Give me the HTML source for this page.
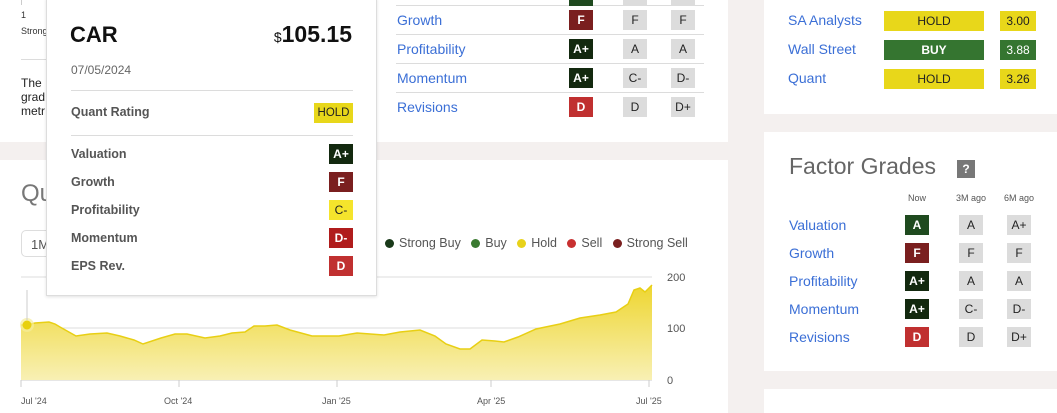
<!DOCTYPE html>
<html><head><meta charset="utf-8"><style>
*{margin:0;padding:0;box-sizing:border-box}
body{width:1057px;height:413px;background:#f4f0ef;position:relative;overflow:hidden;font-family:"Liberation Sans",Arial,sans-serif}
.a{position:absolute}
.w{background:#fff}
.lk{color:#3b6fd6;font-size:14px}
.b{position:absolute;width:24px;height:20px;font-size:12px;line-height:20px;text-align:center;color:#fff;font-weight:bold}
.g{background:#dcdcdc;color:#222;font-weight:normal}
.ap{background:#13290f}.aa{background:#1f4a1f}.ff{background:#7a1f1f}.dd{background:#c03030}.dm{background:#b01c1c}.cm{background:#f5e42c;color:#222;font-weight:normal}
.ln{position:absolute;height:1px;background:#dcdcdc}
.pl{position:absolute;left:24px;font-size:12.5px;font-weight:bold;color:#555}
.dot{display:inline-block;width:9px;height:9px;border-radius:50%;vertical-align:-1px;margin-right:5px}
</style></head><body>
<div class="a w" style="left:0;top:0;width:728px;height:142px"></div>
<div class="a w" style="left:0;top:160px;width:728px;height:253px"></div>
<div class="a w" style="left:764px;top:0;width:293px;height:114px"></div>
<div class="a w" style="left:764px;top:132px;width:293px;height:239px"></div>
<div class="a w" style="left:764px;top:389px;width:293px;height:24px"></div>

<div class="a" style="left:21px;top:0;width:1px;height:5px;background:#ccc"></div>
<div class="a" style="left:21px;top:10px;font-size:9px;color:#333">1</div>
<div class="a" style="left:21px;top:26px;font-size:9px;color:#333">Strong</div>
<div class="ln" style="left:21px;top:59px;width:30px"></div>
<div class="a" style="left:21px;top:76px;font-size:12px;line-height:14px;color:#222">The<br>grad<br>metr</div>
<div class="a" style="left:21px;top:180px;font-size:24px;color:#777">Qu</div>
<div class="a" style="left:21px;top:230px;width:40px;height:27px;border:1px solid #ddd;border-radius:5px;font-size:13px;color:#555;padding:6px 9px">1M</div>

<div class="ln" style="left:396px;top:5px;width:308px"></div>
<div class="ln" style="left:396px;top:34px;width:308px"></div>
<div class="ln" style="left:396px;top:63px;width:308px"></div>
<div class="ln" style="left:396px;top:92px;width:308px"></div>
<div class="b aa" style="left:569px;top:-14px"></div><div class="b g" style="left:623px;top:-14px"></div><div class="b g" style="left:671px;top:-14px"></div>
<div class="a lk" style="left:397px;top:12px">Growth</div>
<div class="b ff" style="left:569px;top:10px">F</div><div class="b g" style="left:623px;top:10px">F</div><div class="b g" style="left:671px;top:10px">F</div>
<div class="a lk" style="left:397px;top:41px">Profitability</div>
<div class="b ap" style="left:569px;top:39px">A+</div><div class="b g" style="left:623px;top:39px">A</div><div class="b g" style="left:671px;top:39px">A</div>
<div class="a lk" style="left:397px;top:70px">Momentum</div>
<div class="b ap" style="left:569px;top:68px">A+</div><div class="b g" style="left:623px;top:68px">C-</div><div class="b g" style="left:671px;top:68px">D-</div>
<div class="a lk" style="left:397px;top:99px">Revisions</div>
<div class="b dd" style="left:569px;top:97px">D</div><div class="b g" style="left:623px;top:97px">D</div><div class="b g" style="left:671px;top:97px">D+</div>

<div class="a" style="left:385px;top:236px;font-size:12.5px;color:#555;white-space:nowrap">
<span class="dot" style="background:#1a3a1a"></span>Strong Buy &nbsp; <span class="dot" style="background:#3a7a30"></span>Buy &nbsp; <span class="dot" style="background:#e8d21a"></span>Hold &nbsp; <span class="dot" style="background:#c83030"></span>Sell &nbsp; <span class="dot" style="background:#7a1f1f"></span>Strong Sell</div>

<svg class="a" style="left:0;top:260px" width="700" height="153">
<defs><linearGradient id="gr" x1="0" y1="0" x2="0" y2="1"><stop offset="0" stop-color="#eed630"/><stop offset="1" stop-color="#f8f0b4"/></linearGradient></defs>
<line x1="21" y1="17" x2="652" y2="17" stroke="#ddd"/>
<line x1="21" y1="68" x2="652" y2="68" stroke="#ddd"/>
<line x1="21" y1="120" x2="652" y2="120" stroke="#ccc"/>
<polygon fill="url(#gr)" points="21,65 27,65 35,63 49,62 55,64 60,67 76,76 90,74 107,73 120,76 134,80 143,84 161,78 175,74 187,74 205,78 220,76 232,73 245,72 254,66 265,66 277,65 290,70 312,76 339,76 357,73 384,75 400,72 420,70 435,76 446,84 460,89 470,89 482,80 495,81 504,82 518,77 536,69 560,64 580,58 600,55 616,52 628,44 634,30 640,28 645,32 652,25 652,120 21,120"/>
<polyline fill="none" stroke="#e8cf14" stroke-width="1.5" points="21,65 27,65 35,63 49,62 55,64 60,67 76,76 90,74 107,73 120,76 134,80 143,84 161,78 175,74 187,74 205,78 220,76 232,73 245,72 254,66 265,66 277,65 290,70 312,76 339,76 357,73 384,75 400,72 420,70 435,76 446,84 460,89 470,89 482,80 495,81 504,82 518,77 536,69 560,64 580,58 600,55 616,52 628,44 634,30 640,28 645,32 652,25"/>
<circle cx="27" cy="65" r="7" fill="#f5ec9a" opacity=".7"/><circle cx="27" cy="65" r="4.5" fill="#e8d00e"/>
<line x1="27" y1="30" x2="27" y2="60" stroke="#ccc"/>
<g stroke="#ccc"><line x1="21" y1="120" x2="21" y2="127"/><line x1="179" y1="120" x2="179" y2="127"/><line x1="337" y1="120" x2="337" y2="127"/><line x1="491" y1="120" x2="491" y2="127"/><line x1="649" y1="120" x2="649" y2="127"/></g>
<g font-size="9" fill="#555" font-family="Liberation Sans,sans-serif"><text x="21" y="144">Jul '24</text><text x="164" y="144">Oct '24</text><text x="322" y="144">Jan '25</text><text x="477" y="144">Apr '25</text><text x="636" y="144">Jul '25</text></g>
<g font-size="11" fill="#555" font-family="Liberation Sans,sans-serif"><text x="667" y="21">200</text><text x="667" y="72">100</text><text x="667" y="124">0</text></g>
</svg>

<div class="a" style="left:46px;top:-2px;width:331px;height:298px;background:#fff;border:1px solid #ddd;box-shadow:0 1px 3px rgba(0,0,0,.12)">
<div class="a" style="left:23px;top:23px;font-size:22px;font-weight:bold;color:#111">CAR</div>
<div class="a" style="right:24px;top:22px;font-size:23px;font-weight:bold;color:#111"><span style="font-size:14px;font-weight:normal">$</span>105.15</div>
<div class="a" style="left:24px;top:64px;font-size:12px;color:#666">07/05/2024</div>
<div class="ln" style="left:24px;top:91px;width:282px"></div>
<div class="pl" style="top:106px">Quant Rating</div>
<div class="a" style="left:267px;top:104px;width:39px;height:20px;background:#e8d71a;font-size:11.5px;line-height:20px;text-align:center;color:#222">HOLD</div>
<div class="ln" style="left:24px;top:136px;width:282px"></div>
<div class="pl" style="top:148px">Valuation</div><div class="b ap" style="left:282px;top:145px">A+</div>
<div class="pl" style="top:176px">Growth</div><div class="b ff" style="left:282px;top:173px">F</div>
<div class="pl" style="top:204px">Profitability</div><div class="b cm" style="left:282px;top:201px">C-</div>
<div class="pl" style="top:232px">Momentum</div><div class="b dm" style="left:282px;top:229px">D-</div>
<div class="pl" style="top:260px">EPS Rev.</div><div class="b dd" style="left:282px;top:257px">D</div>
</div>

<div class="a lk" style="left:788px;top:12px">SA Analysts</div>
<div class="a" style="left:884px;top:11px;width:100px;height:20px;background:#e8d71a;font-size:12px;line-height:20px;text-align:center;color:#222">HOLD</div>
<div class="a" style="left:1000px;top:11px;width:36px;height:20px;background:#e8d71a;font-size:12px;line-height:20px;text-align:center;color:#222">3.00</div>
<div class="a lk" style="left:788px;top:41px">Wall Street</div>
<div class="a" style="left:884px;top:40px;width:100px;height:20px;background:#357530;font-size:12px;line-height:20px;text-align:center;color:#fff;font-weight:bold">BUY</div>
<div class="a" style="left:1000px;top:40px;width:36px;height:20px;background:#357530;font-size:12px;line-height:20px;text-align:center;color:#fff">3.88</div>
<div class="a lk" style="left:788px;top:70px">Quant</div>
<div class="a" style="left:884px;top:69px;width:100px;height:20px;background:#e8d71a;font-size:12px;line-height:20px;text-align:center;color:#222">HOLD</div>
<div class="a" style="left:1000px;top:69px;width:36px;height:20px;background:#e8d71a;font-size:12px;line-height:20px;text-align:center;color:#222">3.26</div>

<div class="a" style="left:789px;top:153px;font-size:23px;color:#666">Factor Grades</div>
<div class="a" style="left:957px;top:160px;width:18px;height:18px;background:#777;color:#fff;font-size:12px;font-weight:bold;text-align:center;line-height:18px">?</div>
<div class="a" style="left:897px;top:193px;width:40px;text-align:center;font-size:9px;color:#555">Now</div>
<div class="a" style="left:947px;top:193px;width:48px;text-align:center;font-size:9px;color:#555">3M ago</div>
<div class="a" style="left:995px;top:193px;width:48px;text-align:center;font-size:9px;color:#555">6M ago</div>
<div class="a lk" style="left:789px;top:217px">Valuation</div>
<div class="b aa" style="left:905px;top:215px">A</div><div class="b g" style="left:959px;top:215px">A</div><div class="b g" style="left:1007px;top:215px">A+</div>
<div class="a lk" style="left:789px;top:245px">Growth</div>
<div class="b ff" style="left:905px;top:243px">F</div><div class="b g" style="left:959px;top:243px">F</div><div class="b g" style="left:1007px;top:243px">F</div>
<div class="a lk" style="left:789px;top:273px">Profitability</div>
<div class="b ap" style="left:905px;top:271px">A+</div><div class="b g" style="left:959px;top:271px">A</div><div class="b g" style="left:1007px;top:271px">A</div>
<div class="a lk" style="left:789px;top:301px">Momentum</div>
<div class="b ap" style="left:905px;top:299px">A+</div><div class="b g" style="left:959px;top:299px">C-</div><div class="b g" style="left:1007px;top:299px">D-</div>
<div class="a lk" style="left:789px;top:329px">Revisions</div>
<div class="b dd" style="left:905px;top:327px">D</div><div class="b g" style="left:959px;top:327px">D</div><div class="b g" style="left:1007px;top:327px">D+</div>
</body></html>
